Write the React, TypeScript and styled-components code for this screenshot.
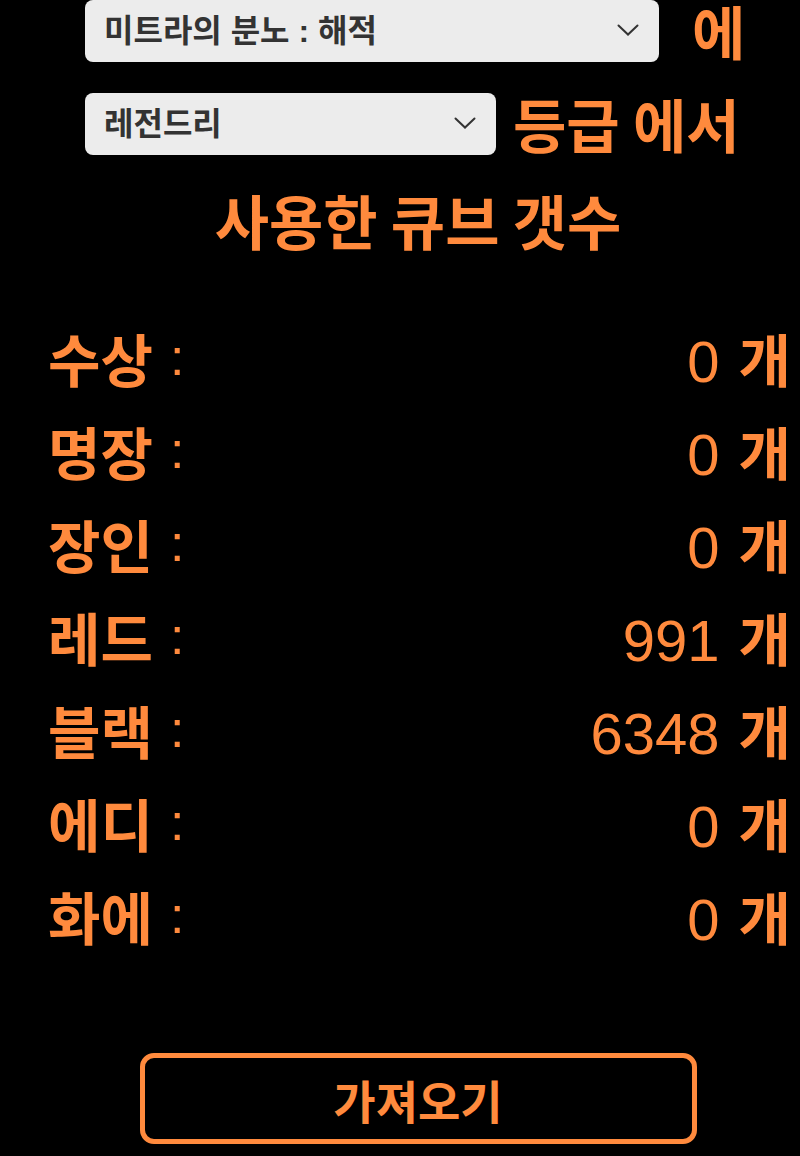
import React from 'react'
import styled, { createGlobalStyle } from 'styled-components'

const ORANGE = '#ff8a3d'
const KR = '"Noto Sans CJK KR", "Noto Sans", sans-serif'
const LATIN = '"Liberation Sans", Arial, "Noto Sans CJK KR", sans-serif'

const GlobalStyle = createGlobalStyle`
  html, body {
    margin: 0;
    padding: 0;
    background: #000;
  }
`

const Page = styled.main`
  width: 800px;
  min-height: 1156px;
  box-sizing: border-box;
  padding-left: 36px;
  background: #000;
  color: ${ORANGE};
  font-family: ${KR};
  display: flex;
  flex-direction: column;
`

const PickRow = styled.div<{ $gap: number }>`
  display: flex;
  align-items: center;
  height: 62px;
  padding-left: 49px;
  gap: ${({ $gap }) => $gap}px;

  & + & {
    margin-top: 31px;
  }
`

const SelectWrap = styled.div<{ $width: number }>`
  position: relative;
  width: ${({ $width }) => $width}px;
  height: 62px;
  flex: none;
`

const Select = styled.select`
  appearance: none;
  width: 100%;
  height: 100%;
  border: none;
  border-radius: 8px;
  background: #ececec;
  color: #333;
  font-family: ${LATIN};
  font-weight: 700;
  font-size: 32px;
  padding: 0 60px 0 19px;
  outline: none;
`

const Chevron = styled.svg`
  position: absolute;
  right: 20px;
  top: 50%;
  width: 22px;
  height: 12px;
  margin-top: -7px;
  pointer-events: none;
`

const PickLabel = styled.span`
  font-size: 58px;
  font-weight: 700;
  line-height: 1.2;
  white-space: nowrap;
`

const Title = styled.h1`
  margin: 30px 0 0;
  font-size: 59px;
  font-weight: 700;
  line-height: 70px;
  text-align: center;
`

const Stats = styled.ul`
  list-style: none;
  margin: 55px 0 0;
  padding: 0 9px 0 12px;
`

const StatRow = styled.li`
  display: flex;
  align-items: center;
  height: 93px;
`

const StatName = styled.span`
  font-size: 57px;
  font-weight: 700;
`

const Colon = styled.span`
  font-family: ${LATIN};
  font-size: 52px;
  margin-left: 17px;
`

const StatValue = styled.span`
  margin-left: auto;
  font-family: ${LATIN};
  font-size: 58px;
`

const Unit = styled.span`
  font-family: ${KR};
  font-weight: 700;
  font-size: 57px;
  margin-left: 19px;
`

const FetchButton = styled.button`
  align-self: center;
  margin: 92px 0 0 0;
  width: 557px;
  height: 91px;
  box-sizing: border-box;
  border: 5px solid ${ORANGE};
  border-radius: 14px;
  background: #000;
  color: ${ORANGE};
  font-family: ${KR};
  font-weight: 700;
  font-size: 46px;
  cursor: pointer;
`

const stats: [string, number][] = [
  ['수상', 0],
  ['명장', 0],
  ['장인', 0],
  ['레드', 991],
  ['블랙', 6348],
  ['에디', 0],
  ['화에', 0],
]

const Dropdown: React.FC<{ width: number; options: string[] }> = ({ width, options }) => (
  <SelectWrap $width={width}>
    <Select defaultValue={options[0]}>
      {options.map((o) => (
        <option key={o}>{o}</option>
      ))}
    </Select>
    <Chevron viewBox="0 0 22 12" fill="none">
      <path d="M1.5 1.5 L11 10.5 L20.5 1.5" stroke="#333" strokeWidth="2" strokeLinecap="round" />
    </Chevron>
  </SelectWrap>
)

const App: React.FC = () => (
  <>
    <GlobalStyle />
    <Page>
      <PickRow $gap={33}>
        <Dropdown width={574} options={['미트라의 분노 : 해적']} />
        <PickLabel>에</PickLabel>
      </PickRow>
      <PickRow $gap={17}>
        <Dropdown width={411} options={['레전드리', '유니크', '에픽', '레어']} />
        <PickLabel>등급 에서</PickLabel>
      </PickRow>
      <Title>사용한 큐브 갯수</Title>
      <Stats>
        {stats.map(([name, count]) => (
          <StatRow key={name}>
            <StatName>{name}</StatName>
            <Colon>:</Colon>
            <StatValue>
              {count}
              <Unit>개</Unit>
            </StatValue>
          </StatRow>
        ))}
      </Stats>
      <FetchButton>가져오기</FetchButton>
    </Page>
  </>
)

export default App
